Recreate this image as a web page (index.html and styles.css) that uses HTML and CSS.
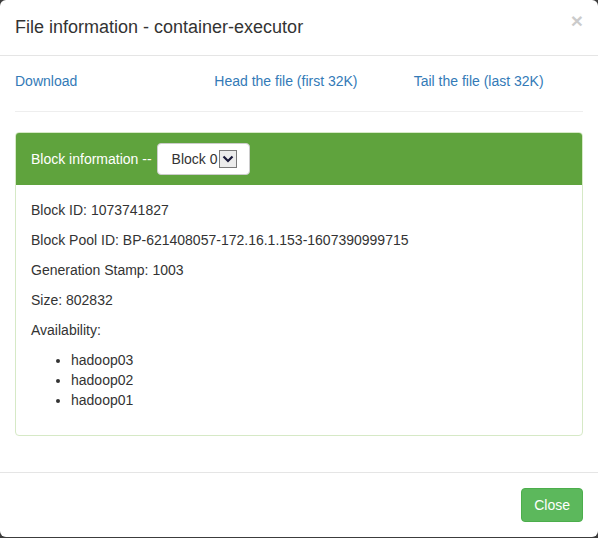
FILE: index.html
```html
<!DOCTYPE html>
<html>
<head>
<meta charset="utf-8">
<link rel="stylesheet" href="styles.css">
</head>
<body>
<div class="modal">
  <div class="modal-header">
    <h4 class="modal-title">File information - container-executor</h4>
    <span class="close">&times;</span>
  </div>
  <div class="modal-body">
    <div class="links">
      <div class="col"><a href="#">Download</a></div>
      <div class="col"><a href="#">Head the file (first 32K)</a></div>
      <div class="col"><a href="#">Tail the file (last 32K)</a></div>
    </div>
    <hr class="divider">
    <div class="panel">
      <div class="panel-heading">
        <span>Block information --</span>
        <div class="select">
          <span class="select-value">Block 0</span>
          <span class="select-arrow">
            <svg width="12" height="8" viewBox="0 0 12 8"><path d="M1.5 1.5 L6 6 L10.5 1.5" fill="none" stroke="#1a1a3a" stroke-width="2.2"/></svg>
          </span>
        </div>
      </div>
      <div class="panel-body">
        <p>Block ID: 1073741827</p>
        <p>Block Pool ID: BP-621408057-172.16.1.153-1607390999715</p>
        <p>Generation Stamp: 1003</p>
        <p>Size: 802832</p>
        <p>Availability:</p>
        <ul>
          <li>hadoop03</li>
          <li>hadoop02</li>
          <li>hadoop01</li>
        </ul>
      </div>
    </div>
  </div>
  <div class="modal-footer">
    <button class="btn">Close</button>
  </div>
</div>
</body>
</html>
```
FILE: styles.css
```css
html, body {
  margin: 0;
  padding: 0;
}
body {
  background: #3c3c3c;
  font-family: "Liberation Sans", Arial, sans-serif;
  font-size: 14px;
  line-height: 20px;
  color: #333;
  width: 598px;
  height: 538px;
  overflow: hidden;
}
.modal {
  width: 598px;
  height: 537px;
  background: #fff;
  border-radius: 6px;
  display: flex;
  flex-direction: column;
}
.modal-header {
  padding: 15px;
  border-bottom: 1px solid #e5e5e5;
  display: flex;
  justify-content: space-between;
  align-items: flex-start;
}
.modal-title {
  margin: 0;
  font-size: 18px;
  font-weight: 500;
  line-height: 25px;
  color: #333;
}
.close {
  font-size: 21px;
  font-weight: bold;
  line-height: 1;
  color: #000;
  opacity: 0.2;
  margin-top: -5px;
}
.modal-body {
  padding: 15px;
  flex: 1;
}
.links {
  display: grid;
  grid-template-columns: repeat(3, 1fr);
  margin: 0 -15px;
}
.links .col {
  padding: 0 15px;
}
.links a {
  color: #337ab7;
  text-decoration: none;
}
.divider {
  margin: 20px 0;
  border: 0;
  border-top: 1px solid #eee;
  height: 0;
}
.panel {
  border: 1px solid #d6e9c6;
  border-radius: 4px;
  margin-bottom: 20px;
}
.panel-heading {
  background: #5fa33d;
  color: #fff;
  padding: 10px 15px;
  display: flex;
  align-items: center;
  border-top-left-radius: 3px;
  border-top-right-radius: 3px;
}
.select {
  margin-left: 5px;
  height: 32px;
  box-sizing: border-box;
  background: #fff;
  border: 1px solid #ccc;
  border-radius: 4px;
  color: #333;
  display: flex;
  align-items: center;
  padding: 0 12px 0 14px;
}
.select-value {
  margin-right: 1px;
}
.select-arrow {
  width: 18px;
  height: 18px;
  box-sizing: border-box;
  border: 1px solid #7a7a7a;
  background: #ececec;
  display: flex;
  align-items: center;
  justify-content: center;
}
.panel-body {
  padding: 15px;
}
.panel-body p {
  margin: 0 0 10px;
}
.panel-body ul {
  margin: 0 0 10px;
  padding-left: 40px;
}
.modal-footer {
  padding: 15px;
  border-top: 1px solid #e5e5e5;
  text-align: right;
}
.btn {
  font-family: "Liberation Sans", Arial, sans-serif;
  font-size: 14px;
  line-height: 20px;
  padding: 6px 12px;
  color: #fff;
  background: #5cb85c;
  border: 1px solid #4cae4c;
  border-radius: 4px;
}
```
